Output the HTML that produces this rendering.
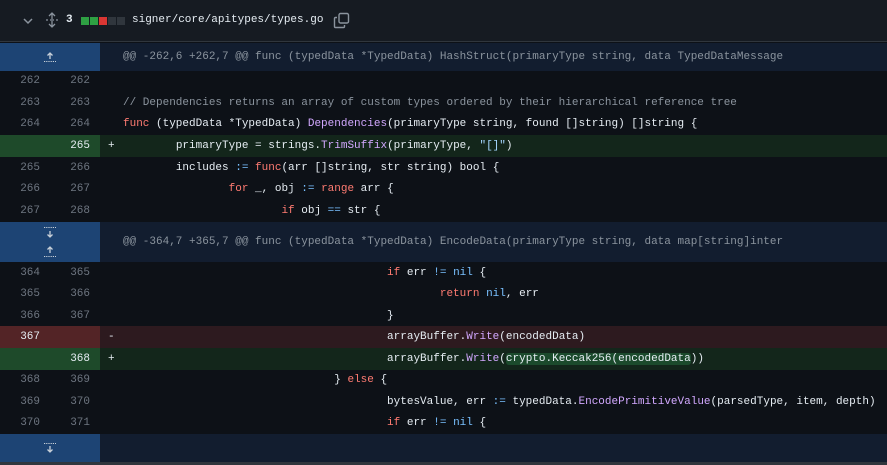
<!DOCTYPE html>
<html><head><style>
body{margin:0;background:#0d1117;width:887px;height:465px;overflow:hidden;font-family:"Liberation Sans",sans-serif}
.hdr{position:absolute;left:0;top:0;width:887px;height:42px;background:#161b22;border-bottom:1px solid #30363d;box-sizing:border-box}
.hdr .t{position:absolute;top:14px;font:11px "Liberation Mono",monospace;color:#e6edf3}
.sq{position:absolute;top:17px;width:8px;height:8px}
.row{position:absolute;left:0;width:887px;height:22px;font:11px/22px "Liberation Mono",monospace;color:#e6edf3;white-space:pre;tab-size:8;-moz-tab-size:8}
.n1,.n2{position:absolute;top:0;height:100%;width:50px;text-align:right;color:#6e7681}
.n1{left:0;width:40px}.n2{left:50px;width:40px}
.m{position:absolute;left:108px}
.c{position:absolute;left:123px}
.hunk{position:absolute;left:0;width:887px;background:#121d2f;font:11px "Liberation Mono",monospace;color:#8b949e;white-space:pre}
.hunk .g{position:absolute;left:0;top:0;width:100px;height:100%;background:#1d4474}
.k{color:#ff7b72}.f{color:#d2a8ff}.o{color:#79c0ff}.s{color:#a5d6ff}
.del{background:#2d1a1f}.del .n1,.del .n2{background:#532426;color:#e6edf3}
.add{background:#13261b}.add .n1,.add .n2{background:#1e4a2a;color:#e6edf3}
.add .n1{width:50px}.del .n2{left:40px;width:60px}
.add .n2{left:50px;width:50px;padding-right:10px;box-sizing:border-box}
.del .n1{width:50px;padding-right:10px;box-sizing:border-box}
.hl{background:#1b4a2c;border-radius:3px}
</style></head><body>
<div class="hdr">
<svg style="position:absolute;left:22px;top:15px" width="12" height="12" viewBox="0 0 12 12"><path d="M2 4l4 4 4-4" stroke="#8b949e" stroke-width="1.5" fill="none"/></svg>
<svg style="position:absolute;left:45px;top:12px" width="14" height="16" viewBox="0 0 14 16"><path d="M7 1v14M4 4l3-3 3 3M4 12l3 3 3-3M1 8h2M5 8h1M8 8h1M11 8h2" stroke="#8b949e" stroke-width="1.3" fill="none"/></svg>
<span class="t" style="left:66px;font-weight:bold">3</span>
<div class="sq" style="left:81px;background:#2ea043"></div>
<div class="sq" style="left:90px;background:#2ea043"></div>
<div class="sq" style="left:99px;background:#da3633"></div>
<div class="sq" style="left:108px;background:#30363d"></div>
<div class="sq" style="left:117px;background:#30363d"></div>
<span class="t" style="left:132px">signer/core/apitypes/types.go</span>
<svg style="position:absolute;left:333px;top:12px" width="17" height="17" viewBox="0 0 17 17"><rect x="6" y="1.5" width="9.5" height="9.5" rx="1.5" stroke="#8b949e" stroke-width="1.4" fill="none"/><path d="M4 5.5H2.5a1 1 0 0 0-1 1v8a1 1 0 0 0 1 1h8a1 1 0 0 0 1-1V13" stroke="#8b949e" stroke-width="1.4" fill="none"/></svg>
</div>

<div class="hunk" style="top:43px;height:28px"><div class="g"><svg style="position:absolute;left:43px;top:8px" width="14" height="12" viewBox="0 0 14 12"><path d="M7 8V2M4.5 4.5L7 2l2.5 2.5" stroke="#c9d1d9" stroke-width="1.3" fill="none"/><path d="M1 10.5h12" stroke="#c9d1d9" stroke-dasharray="1.2 1" stroke-width="1"/></svg></div><span style="position:absolute;left:123px;top:8px">@@ -262,6 +262,7 @@ func (typedData *TypedData) HashStruct(primaryType string, data TypedDataMessage</span></div>

<div class="row" style="top:70px"><span class="n1">262</span><span class="n2">262</span></div>
<div class="row" style="top:92px"><span class="n1">263</span><span class="n2">263</span><span class="c" style="color:#8b949e">// Dependencies returns an array of custom types ordered by their hierarchical reference tree</span></div>
<div class="row" style="top:113px"><span class="n1">264</span><span class="n2">264</span><span class="c"><span class="k">func</span> (typedData *TypedData) <span class="f">Dependencies</span>(primaryType string, found []string) []string {</span></div>
<div class="row add" style="top:135px"><span class="n1"></span><span class="n2">265</span><span class="m">+</span><span class="c">	primaryType = strings.<span class="f">TrimSuffix</span>(primaryType, <span class="s">"[]"</span>)</span></div>
<div class="row" style="top:157px"><span class="n1">265</span><span class="n2">266</span><span class="c">	includes <span class="o">:=</span> <span class="k">func</span>(arr []string, str string) bool {</span></div>
<div class="row" style="top:178px"><span class="n1">266</span><span class="n2">267</span><span class="c">		<span class="k">for</span> _, obj <span class="o">:=</span> <span class="k">range</span> arr {</span></div>
<div class="row" style="top:200px"><span class="n1">267</span><span class="n2">268</span><span class="c">			<span class="k">if</span> obj <span class="o">==</span> str {</span></div>

<div class="hunk" style="top:222px;height:40px"><div class="g"><svg style="position:absolute;left:43px;top:4px" width="14" height="32" viewBox="0 0 14 32"><path d="M1 1.5h12M1 30.5h12" stroke="#c9d1d9" stroke-dasharray="1.2 1" stroke-width="1"/><path d="M7 5v6M4.5 8.5L7 11l2.5-2.5M7 27v-6M4.5 23.5L7 21l2.5 2.5" stroke="#c9d1d9" stroke-width="1.3" fill="none"/></svg></div><span style="position:absolute;left:123px;top:14px">@@ -364,7 +365,7 @@ func (typedData *TypedData) EncodeData(primaryType string, data map[string]inter</span></div>

<div class="row" style="top:262px"><span class="n1">364</span><span class="n2">365</span><span class="c">					<span class="k">if</span> err <span class="o">!=</span> <span class="o">nil</span> {</span></div>
<div class="row" style="top:283px"><span class="n1">365</span><span class="n2">366</span><span class="c">						<span class="k">return</span> <span class="o">nil</span>, err</span></div>
<div class="row" style="top:305px"><span class="n1">366</span><span class="n2">367</span><span class="c">					}</span></div>
<div class="row del" style="top:326px"><span class="n1">367</span><span class="n2"></span><span class="m">-</span><span class="c">					arrayBuffer.<span class="f">Write</span>(encodedData)</span></div>
<div class="row add" style="top:348px"><span class="n1"></span><span class="n2">368</span><span class="m">+</span><span class="c">					arrayBuffer.<span class="f">Write</span>(<span class="hl">crypto.Keccak256(encodedData</span>))</span></div>
<div class="row" style="top:369px"><span class="n1">368</span><span class="n2">369</span><span class="c">				} <span class="k">else</span> {</span></div>
<div class="row" style="top:391px"><span class="n1">369</span><span class="n2">370</span><span class="c">					bytesValue, err <span class="o">:=</span> typedData.<span class="f">EncodePrimitiveValue</span>(parsedType, item, depth)</span></div>
<div class="row" style="top:412px"><span class="n1">370</span><span class="n2">371</span><span class="c">					<span class="k">if</span> err <span class="o">!=</span> <span class="o">nil</span> {</span></div>

<div class="hunk" style="top:434px;height:28px"><div class="g"><svg style="position:absolute;left:43px;top:8px" width="14" height="12" viewBox="0 0 14 12"><path d="M1 1.5h12" stroke="#c9d1d9" stroke-dasharray="1.2 1" stroke-width="1"/><path d="M7 4v6M4.5 7.5L7 10l2.5-2.5" stroke="#c9d1d9" stroke-width="1.3" fill="none"/></svg></div></div>
<div style="position:absolute;left:0;top:462px;width:887px;height:3px;background:#30363d"></div>
</body></html>
